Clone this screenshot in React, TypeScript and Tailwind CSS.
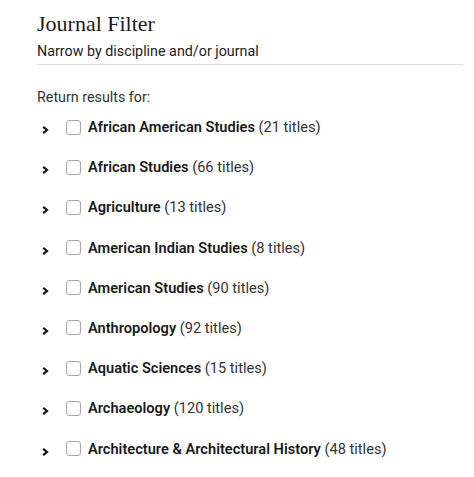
import React from "react";

const items: [string, number][] = [
  ["African American Studies", 21],
  ["African Studies", 66],
  ["Agriculture", 13],
  ["American Indian Studies", 8],
  ["American Studies", 90],
  ["Anthropology", 92],
  ["Aquatic Sciences", 15],
  ["Archaeology", 120],
  ["Architecture & Architectural History", 48],
];

function Chevron() {
  return (
    <svg width="9" height="10" viewBox="0 0 9 10" className="mt-[6px]">
      <path d="M2.2 1.8 L6 5 L2.2 8.2" fill="none" stroke="#111" strokeWidth="2.2" />
    </svg>
  );
}

export default function App() {
  return (
    <div className="min-h-[477px] w-[474px] bg-white pl-[37px] pr-[11px] pt-[10px] text-[#222]" style={{ fontFamily: "Roboto, 'Liberation Sans', sans-serif" }}>
      <h1 className="text-[22px] leading-[28px] text-[#1a1a1a]" style={{ fontFamily: "'Liberation Serif', serif" }}>
        Journal Filter
      </h1>
      <div className="mt-[3px] border-b border-[#dcdcdc] pb-[3px] text-[14.3px] leading-[20px] text-[#222]">
        Narrow by discipline and/or journal
      </div>
      <div className="mt-[22px] text-[14.3px] leading-[20px] text-[#333]">Return results for:</div>
      <ul className="mt-[10px] flex flex-col gap-[20.2px]">
        {items.map(([name, n]) => (
          <li key={name} className="flex h-[20px] items-center">
            <div className="flex w-[29px] justify-start pl-[4px]">
              <Chevron />
            </div>
            <span className="h-[15px] w-[15px] rounded-[3px] border border-[#a6a6a6] bg-white" />
            <span className="ml-[7px] text-[14.6px] leading-[20px] text-[#1a1a1a]">
              <span className="font-semibold">{name}</span>{" "}
              <span className="text-[#333]">({n} titles)</span>
            </span>
          </li>
        ))}
      </ul>
    </div>
  );
}
